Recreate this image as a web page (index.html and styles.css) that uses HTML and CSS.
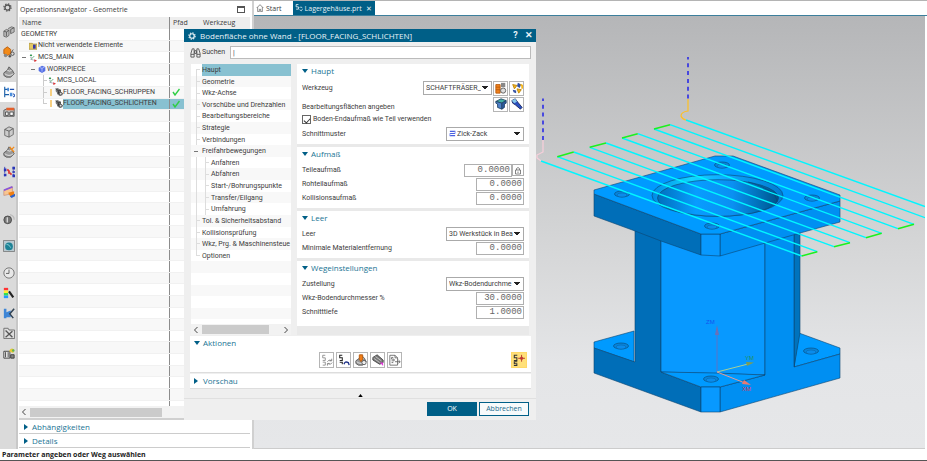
FILE: index.html
```html
<!DOCTYPE html>
<html lang="de">
<head>
<meta charset="utf-8">
<title>Lagergehäuse.prt</title>
<link rel="stylesheet" href="styles.css">
</head>
<body>
<svg class="defs" aria-hidden="true">
  <symbol id="gear" viewBox="0 0 12 12"><circle cx="6" cy="6" r="3.4" fill="none" stroke="currentColor" stroke-width="1.8"/><circle cx="6" cy="6" r="4.8" fill="none" stroke="currentColor" stroke-width="1.6" stroke-dasharray="1.9 1.87"/></symbol>
  <symbol id="csys" viewBox="0 0 12 12"><path d="M3 1v7l7 2" fill="none" stroke="#557" stroke-width="1" stroke-dasharray="2 1"/><path d="M1 3l2-3 2 3z" fill="#2a9a4a"/><path d="M3 8l5-5" stroke="#2a9a4a"/><path d="M8 8l4 2-4 2z" fill="#d33"/></symbol>
  <symbol id="mill" viewBox="0 0 12 12"><path d="M1 1l3-1 5 3v3l3 2-1 3-4 1-4-3V7L1 5z" fill="#777"/><path d="M1 1l4 3v4l3 2M5 4l4-1M5 7l4-1" fill="none" stroke="#222"/><circle cx="8.500" cy="8.500" r="2" fill="#ddd" stroke="#333"/></symbol>
  <symbol id="part" viewBox="0 0 14 14"><path d="M1 8l4-3 2-4 4 4 2 4-4 4H4L1 11z" fill="#999" stroke="#555"/><path d="M2 9q5 4 10 0M5 5q3 2 5 0" fill="none" stroke="#eee"/></symbol>
</svg>
<div class="workspace">
  <nav class="rail" aria-label="Ressourcenleiste">
    <button aria-label="Einstellungen"><svg viewBox="0 0 12 12"><use href="#gear"/></svg></button>
    <button aria-label="Baugruppe"><svg viewBox="0 0 14 14"><path d="M1 6l3-2 3 1v6l-3 2-3-1zM6 3l4-2 3 1v5l-4 2" fill="#bbb" stroke="#666"/><path d="M1 6l3 1v5M4 7l3-2M9 9V4l4-2" fill="none" stroke="#555"/></svg></button>
    <button aria-label="Beziehungen"><svg viewBox="0 0 14 14"><path d="M1 4l4-3 4 3v5l-4 2-4-2z" fill="#f28a18" stroke="#b65a0a"/><circle cx="3" cy="11" r="2" fill="#888"/><circle cx="11" cy="9" r="2" fill="none" stroke="#444"/><circle cx="8" cy="12" r="1.500" fill="#555"/><path d="M10 7l2-3" stroke="#555"/></svg></button>
    <button aria-label="Teile"><svg viewBox="0 0 14 14"><use href="#part"/></svg></button>
    <button class="current" aria-label="Operationsnavigator"><svg viewBox="0 0 14 14"><path d="M2 1v12M2 4h4M2 10h5" fill="none" stroke="#1b5fa8" stroke-width="1.300"/><path d="M5 2h2v4H5zM8 8h3v4H8z" fill="#4b8ddb"/><path d="M8 4h5M12 9l2 2-2 2" stroke="#1e4fb0" stroke-width="1.300" fill="none"/></svg></button>
    <button aria-label="Maschine"><svg viewBox="0 0 14 14"><path d="M1 5l4-2h8v9H1z" fill="#bbb" stroke="#555"/><path d="M4 2h9v3H4z" fill="#e4602b"/><path d="M3 7h3v4H3zM8 7h4v4H8z" fill="#fff" stroke="#444"/></svg></button>
    <button aria-label="Körper"><svg viewBox="0 0 14 14"><path d="M2 4l5-3 5 2v7l-5 3-5-2z" fill="#ccc" stroke="#666"/><path d="M2 4l5 2v7M7 6l5-3" fill="none" stroke="#555"/></svg></button>
    <button aria-label="Wiederverwendung"><svg viewBox="0 0 14 14"><use href="#part"/><path d="M8 1l2 3 3-3M10 4l3 3" stroke="#f28a18" stroke-width="1.500" fill="none"/></svg></button>
    <button aria-label="Abhängigkeit"><svg viewBox="0 0 14 14"><path d="M1 3h3v3H1zM1 9h3v3H1zM11 1h3v3h-3zM11 6h3v2h-3zM11 10h3v3h-3z" fill="#2a36b8"/><path d="M2 1v12M12 1v12" stroke="#2a36b8" stroke-dasharray="3 1"/><path d="M5 4l2 2v3M8 8l2 2" stroke="#d33" stroke-width="2" fill="none"/></svg></button>
    <button aria-label="Ansichten"><svg viewBox="0 0 14 14"><path d="M1 5l10-4v8L1 11z" fill="#f9c68f" stroke="#c98"/><path d="M1 5l10-4" stroke="#8a56d8" stroke-width="2"/><path d="M6 8l7-2v4l-4 3z" fill="#f07f12"/><path d="M8 12l6-3v3l-4 2z" fill="#2d62cc"/></svg></button>
    <button class="spaced" aria-label="Web"><svg viewBox="0 0 14 14"><circle cx="5.500" cy="8" r="4.500" fill="#777" stroke="#444"/><path d="M5 5v6" stroke="#ddd" stroke-width="1.500"/><path d="M8 2q5 1 5 6" stroke="#bbb" stroke-width="1.500" fill="none"/></svg></button>
    <button class="spaced" aria-label="Browser"><svg viewBox="0 0 14 14"><path d="M.5 .5h13v13H.5z" fill="#b9c9d0" stroke="#777"/><circle cx="7" cy="7.500" r="4.500" fill="#1d8295"/><path d="M4 5l3 1 2 3" stroke="#8ed0d8" fill="none"/></svg></button>
    <button class="spaced" aria-label="Verlauf"><svg viewBox="0 0 14 14"><circle cx="7" cy="7" r="6" fill="#e8e8e8" stroke="#666"/><path d="M7 3v4.500H3.500" stroke="#555" fill="none"/></svg></button>
    <button aria-label="Farben"><svg viewBox="0 0 14 14"><path d="M1 1h5v3H1z" fill="#f33"/><path d="M1 4h5v3H1z" fill="#fe3"/><path d="M1 7h5v3H1z" fill="#3d5"/><path d="M1 10h5v3H1z" fill="#29f"/><path d="M7 5l5 7" stroke="#222" stroke-width="2.500"/></svg></button>
    <button aria-label="Werkzeuge"><svg viewBox="0 0 14 14"><path d="M1 2h3v11H1zM4 6l5-2v8H4z" fill="#3e86d6"/><path d="M13 2L8 8l4 5" stroke="#345" stroke-width="1.800" fill="none"/></svg></button>
    <button aria-label="Rollen"><svg viewBox="0 0 14 14"><path d="M1 1.500h5l1 2h6.500v10H1z" fill="#ddd" stroke="#666"/><path d="M3 4l8 8M11 5l-8 7" stroke="#555" stroke-width="1.500"/></svg></button>
    <button aria-label="Fertigung"><svg viewBox="0 0 14 14"><path d="M1 5h7v8H1z" fill="#eee" stroke="#333"/><path d="M3 6v6M6 6v6M9 9h4v4H9z" stroke="#333" fill="#888"/><path d="M7 5q2-5 6-2l-1 4z" fill="#e8c834"/><circle cx="12" cy="4" r="1.500" fill="#5db84e"/></svg></button>
  </nav>

  <section class="navigator">
    <header class="nav-title"><span>Operationsnavigator - Geometrie</span><button class="maximize" aria-label="Maximieren"></button></header>
    <table class="ops">
      <thead><tr><th>Name</th><th>Pfad</th><th>Werkzeug</th></tr></thead>
      <tbody>
        <tr><td>GEOMETRY</td><td></td><td></td></tr>
        <tr><td class="d1"><svg viewBox="0 0 12 12"><path d="M0 2h5l1 1h6v8H0z" fill="#e2c765" stroke="#a58b30"/><path d="M6 4h4v6H6z" fill="#3438a8"/></svg>Nicht verwendete Elemente</td><td></td><td></td></tr>
        <tr><td class="d1 open"><svg viewBox="0 0 12 12"><use href="#csys"/></svg>MCS_MAIN</td><td></td><td></td></tr>
        <tr><td class="d2 open"><svg viewBox="0 0 12 12"><path d="M1 4l5-3 5 2v6l-5 3-5-3z" fill="#5570e4"/><path d="M3 4l3 1v5M6 5l4-2" stroke="#cdd6ff" fill="none"/></svg>WORKPIECE</td><td></td><td></td></tr>
        <tr><td class="d3"><svg viewBox="0 0 12 12"><use href="#csys"/></svg>MCS_LOCAL</td><td></td><td></td></tr>
        <tr><td class="d3 op"><svg viewBox="0 0 12 12"><use href="#mill"/></svg><span>FLOOR_FACING_SCHRUPPEN</span></td><td><svg class="check" viewBox="0 0 8 8"><path d="M1 4l2 3 4.500-6" fill="none" stroke="#2fce45" stroke-width="1.400"/></svg></td><td></td></tr>
        <tr class="selected"><td class="d3 op end"><svg viewBox="0 0 12 12"><use href="#mill"/></svg><span>FLOOR_FACING_SCHLICHTEN</span></td><td><svg class="check" viewBox="0 0 8 8"><path d="M1 4l2 3 4.500-6" fill="none" stroke="#2fce45" stroke-width="1.400"/></svg></td><td></td></tr>
        <tr><td></td><td></td><td></td></tr>
        <tr><td></td><td></td><td></td></tr>
        <tr><td></td><td></td><td></td></tr>
        <tr><td></td><td></td><td></td></tr>
        <tr><td></td><td></td><td></td></tr>
        <tr><td></td><td></td><td></td></tr>
        <tr><td></td><td></td><td></td></tr>
        <tr><td></td><td></td><td></td></tr>
        <tr><td></td><td></td><td></td></tr>
        <tr><td></td><td></td><td></td></tr>
        <tr><td></td><td></td><td></td></tr>
        <tr><td></td><td></td><td></td></tr>
        <tr><td></td><td></td><td></td></tr>
        <tr><td></td><td></td><td></td></tr>
        <tr><td></td><td></td><td></td></tr>
        <tr><td></td><td></td><td></td></tr>
        <tr><td></td><td></td><td></td></tr>
        <tr><td></td><td></td><td></td></tr>
        <tr><td></td><td></td><td></td></tr>
        <tr><td></td><td></td><td></td></tr>
        <tr><td></td><td></td><td></td></tr>
        <tr><td></td><td></td><td></td></tr>
        <tr><td></td><td></td><td></td></tr>
        <tr><td></td><td></td><td></td></tr>
        <tr><td></td><td></td><td></td></tr>
        <tr class="partial"><td></td><td></td><td></td></tr>
      </tbody>
    </table>
    <div class="hscroll"><svg viewBox="0 0 8 8"><path d="M5.500 1l-3 3 3 3"/></svg><i></i></div>
    <button class="fold">Abhängigkeiten</button>
    <button class="fold">Details</button>
  </section>

  <main class="stage">
    <div class="tabs">
      <button class="tab"><svg viewBox="0 0 12 12"><path d="M1 6l5-5 5 5M2.500 5v6.500h2.500V8h2v3.500h2.500V5" fill="none" stroke="#555"/></svg>Start</button>
      <button class="tab active"><svg viewBox="0 0 14 14"><path d="M6 1H2v4h4v4H2" fill="none" stroke="currentColor" stroke-width="1.500"/><path d="M8 7l2-2 3 2M13 9l-2 3-3-2" fill="none" stroke="currentColor" stroke-width="1.300"/></svg>Lagergehäuse.prt<span class="close">✕</span></button>
    </div>
    <div class="view">
      <svg viewBox="254 16 671 432" preserveAspectRatio="xMidYMid meet" role="img" aria-label="3D-Modell mit Werkzeugweg">
        <defs>
          <linearGradient id="bore"><stop offset="0" stop-color="#0070bd"/><stop offset=".32" stop-color="#089cff"/><stop offset=".62" stop-color="#0a90f2"/><stop offset=".85" stop-color="#006fb6"/><stop offset="1" stop-color="#00518a"/></linearGradient>
          <linearGradient id="rim"><stop offset="0" stop-color="#0089e6"/><stop offset=".3" stop-color="#12d5ff"/><stop offset=".55" stop-color="#0fa8ff"/><stop offset="1" stop-color="#007bd0"/></linearGradient>
        </defs>
        <g stroke="#0b4470" stroke-width=".6" stroke-linejoin="round">
          <path d="M594 342L634 331V362L594 348z" fill="#009aff"/>
          <path d="M799 333L840 348V354L794 367z" fill="#009aff"/>
          <path d="M794 230H800V333L794 367z" fill="#0073bd"/>
          <path d="M635 228L661 235V372L701 387V412L594 373V348L635 362z" fill="#006eb8"/>
          <path d="M661 235H765V375L661 372z" fill="#0899ff"/>
          <path d="M765 235L794 228V367L840 354V378L720 412V387L765 375z" fill="#008ff2"/>
          <path d="M661 372L716 373L765 375L720 387H701z" fill="#009aff"/>
          <path d="M701 387H720V412H701z" fill="#0899ff"/>
          <path d="M594 194L701 234V255L661 241L635 231L594 216z" fill="#006eb8"/>
          <path d="M720 234L840 201V222L800 233L720 256z" fill="#008ff2"/>
          <path d="M701 234H720V256L701 255z" fill="#0899ff"/>
          <path d="M715 156H733L840 195V201L720 234H701L594 194V190z" fill="#009aff"/>
          <ellipse cx="717.500" cy="195.500" rx="65.500" ry="20.800" fill="url(#rim)"/>
          <ellipse cx="718" cy="198" rx="60.500" ry="18.300" fill="url(#bore)"/>
          <path d="M748 182Q777 190 777 202" fill="none"/>
          <g fill="#0785dc"><ellipse cx="722" cy="165" rx="7.500" ry="3"/><ellipse cx="622" cy="194" rx="7.500" ry="3"/><ellipse cx="812" cy="198" rx="7.500" ry="3"/><ellipse cx="712" cy="226" rx="7.500" ry="3"/><ellipse cx="621" cy="346" rx="7.500" ry="3"/><ellipse cx="811" cy="351" rx="7.500" ry="3"/><ellipse cx="711" cy="379" rx="7.500" ry="3"/></g>
          <g fill="#0a8ceb" stroke-width=".3"><ellipse cx="722" cy="166" rx="5" ry="2"/><ellipse cx="622" cy="195" rx="5" ry="2"/><ellipse cx="812" cy="199" rx="5" ry="2"/><ellipse cx="712" cy="227" rx="5" ry="2"/><ellipse cx="621" cy="347" rx="5" ry="2"/><ellipse cx="811" cy="352" rx="5" ry="2"/><ellipse cx="711" cy="380" rx="5" ry="2"/></g>
        </g>
        <path d="M686 120L925 206.500M670 124.700L925 217.700M654 129L914 224.300M637.700 133.700L898 228.700M622 138L881.700 233.300M606 143L866 237.700M589.700 147.300L850 242.700M573.700 152L834 246.700M557.300 156.700L817.300 251.700M541 161L801.700 256" fill="none" stroke="#00f6ff" stroke-width="1.400"/>
        <path d="M670 124.700L654 129M637.700 133.700L622 138M606 143L589.700 147.300M573.700 152L557.300 156.700M914 224.300L898 228.700M881.700 233.300L866 237.700M850 242.700L834 246.700M817.300 251.700L801.700 256" stroke="#1df01d" stroke-width="1.500"/>
        <path d="M688 57V99M543 98.500V140" stroke="#2020e8" stroke-width="1.500" stroke-dasharray="4 3.800" stroke-dashoffset="1.500"/>
        <path d="M688 99V111Q681 112 681 116Q682 119 686 120" fill="none" stroke="#ffc022" stroke-width="1.200"/>
        <path d="M543 140V152L537 155V158L541 161" fill="none" stroke="#f8cfdb" stroke-width="1.200"/>
        <path d="M717 372V331" stroke="#5b74c8"/><path d="M715 335L717 325L719 335z" fill="#6a70b8"/>
        <path d="M717 372L750 363.500" stroke="#a5cf98"/><path d="M746 362L754 362.500L747 366z" fill="#7d9c55"/>
        <path d="M717 372L745 383" stroke="#e49a98"/><path d="M744 380L751 385L742 384z" fill="#e97a70"/>
        <text class="axis" x="706" y="324" fill="#1553f0">ZM</text><text class="axis" x="745" y="360" fill="#23925c">YM</text><text class="axis" x="742" y="391" fill="#d83a5a">XM</text>
      </svg>
    </div>
  </main>
</div>
<footer class="status">Parameter angeben oder Weg auswählen</footer>

<form class="dialog" role="dialog" aria-label="Bodenfläche ohne Wand">
  <header class="dlg-title"><svg viewBox="0 0 12 12"><use href="#gear"/></svg><h1>Bodenfläche ohne Wand - [FLOOR_FACING_SCHLICHTEN]</h1><button type="button" aria-label="Hilfe">?</button><button type="button" aria-label="Schließen">✕</button></header>
  <div class="search"><svg viewBox="0 0 12 12"><path d="M1 11V7l1.500-5h2v9zM7.500 11V2h2L11 7v4zM5 4h2v3H5zM1 8h3.500M7.500 8H11" fill="none" stroke="#555"/></svg><label for="q">Suchen</label><input id="q" type="text" value="|"></div>
  <div class="cols">
    <div class="treebox">
      <ul class="tree">
        <li class="first on"><span>Haupt</span></li>
        <li><span>Geometrie</span></li>
        <li><span>Wkz-Achse</span></li>
        <li><span>Vorschübe und Drehzahlen</span></li>
        <li><span>Bearbeitungsbereiche</span></li>
        <li><span>Strategie</span></li>
        <li><span>Verbindungen</span></li>
        <li class="open"><span>Freifahrbewegungen</span></li>
        <li class="sub"><span>Anfahren</span></li>
        <li class="sub"><span>Abfahren</span></li>
        <li class="sub"><span>Start-/Bohrungspunkte</span></li>
        <li class="sub"><span>Transfer/Eilgang</span></li>
        <li class="sub"><span>Umfahrung</span></li>
        <li><span>Tol. &amp; Sicherheitsabstand</span></li>
        <li><span>Kollisionsprüfung</span></li>
        <li><span>Wkz, Prg. &amp; Maschinensteue</span></li>
        <li class="last"><span>Optionen</span></li>
        <li class="empty"></li><li class="empty"></li><li class="empty"></li><li class="empty"></li><li class="empty"></li><li class="empty partial"></li>
      </ul>
      <div class="hscroll"><svg viewBox="0 0 8 8"><path d="M5.500 1l-3 3 3 3"/></svg><i></i><svg class="fwd" viewBox="0 0 8 8"><path d="M2.500 1l3 3-3 3"/></svg></div>
    </div>
    <div class="props">
      <section>
        <h2>Haupt</h2>
        <div class="row tall"><label for="tool">Werkzeug</label><select id="tool" class="tool"><option>SCHAFTFRÄSER_I</option></select>
          <button type="button" class="ib" aria-label="Werkzeug bearbeiten"><svg viewBox="0 0 14 14"><path d="M1 3h5v10H1z" fill="#f0811c" stroke="#b85a0a"/><path d="M1 6h5M1 9h5" stroke="#b85a0a"/><path d="M7 1h5v5H7z" fill="#888"/><circle cx="9.500" cy="10" r="3" fill="#ddd" stroke="#555"/></svg></button>
          <button type="button" class="ib" aria-label="Neues Werkzeug"><svg viewBox="0 0 14 14"><path d="M2 3l5 1-3 4zM7 8l5 1-3 4z" fill="#f5b51b" stroke="#b98207"/><path d="M8 1l4 2-2 4-3-2zM2 9l4 1v3l-3-1z" fill="#3552a4"/><path d="M11 3l2 1v4" stroke="#f5b51b" stroke-width="2" fill="none"/></svg></button></div>
        <div class="row tall low"><span>Bearbeitungsflächen angeben</span>
          <button type="button" class="ib" aria-label="Flächen"><svg viewBox="0 0 14 14"><path d="M1 4l6-3 6 2-5 3z" fill="#43b0a5" stroke="#246"/><path d="M1 4l7 2v7l-5-2V7L1 6z" fill="#4f82ca" stroke="#246"/><path d="M8 6l5-3v3l-2 1v4l-3 2z" fill="#2b5aa0" stroke="#246"/></svg></button>
          <button type="button" class="ib" aria-label="Anzeigen"><svg viewBox="0 0 14 14"><path d="M1 3l4-2 3 4 5 6-2 2-6-5-3-2z" fill="#2a4fc0" stroke="#18255a"/><path d="M1 3q1 2 3 3l3-2-2-3z" fill="#86c5e8"/></svg></button></div>
        <div class="row mid"><input type="checkbox" id="fin" checked><label for="fin">Boden-Endaufmaß wie Teil verwenden</label></div>
        <div class="row"><label for="cut">Schnittmuster</label><span class="withicon"><svg viewBox="0 0 8 8"><path d="M1 1.500h6M7 4H1M1 6.500h6" stroke="#4a5fe0" stroke-width="1.400"/><path d="M7 1v3M1 4v3" stroke="#8a98f0"/></svg><select id="cut"><option>Zick-Zack</option></select></span></div>
      </section>
      <section>
        <h2>Aufmaß</h2>
        <div class="row"><label for="a1">Teileaufmaß</label><input class="num" id="a1" value="0.0000"><button type="button" class="lock" aria-label="Sperren"><svg viewBox="0 0 8 8"><path d="M1.500 3.500h5v4h-5zM2.500 3.500V2q1.500-2 3 0v1.500M4 5v1.500" fill="none" stroke="#666" stroke-width=".8"/></svg></button></div>
        <div class="row"><label for="a2">Rohteilaufmaß</label><input class="num" id="a2" value="0.0000"></div>
        <div class="row"><label for="a3">Kollisionsaufmaß</label><input class="num" id="a3" value="0.0000"></div>
      </section>
      <section>
        <h2>Leer</h2>
        <div class="row"><label for="l1">Leer</label><select id="l1"><option>3D Werkstück in Bea</option></select></div>
        <div class="row"><label for="l2">Minimale Materialentfernung</label><input class="num" id="l2" value="0.0000"></div>
      </section>
      <section class="end">
        <h2>Wegeinstellungen</h2>
        <div class="row"><label for="w1">Zustellung</label><select id="w1"><option>Wkz-Bodendurchme</option></select></div>
        <div class="row"><label for="w2">Wkz-Bodendurchmesser %</label><input class="num" id="w2" value="30.0000"></div>
        <div class="row"><label for="w3">Schnitttiefe</label><input class="num" id="w3" value="1.0000"></div>
      </section>
    </div>
  </div>
  <section class="group">
    <h2>Aktionen</h2>
    <div class="actions">
      <button type="button" class="ib" aria-label="Generieren"><svg viewBox="0 0 14 14"><path d="M5 1.500H2v3h3v3H2M2 9.500h3V13H2" fill="none" stroke="#888"/><path d="M7.500 9q1.500-3 4.500-1.500M12.500 5.500v2.500h-2.500M13 10q-1.500 3-4.500 1.500M7.500 13.500V11H10" fill="none" stroke="#777"/></svg></button>
      <button type="button" class="ib" aria-label="Wiedergeben"><svg viewBox="0 0 14 14"><path d="M5 1.500H2v3h3v3H2M2 9.500h3V12" fill="none" stroke="#222" stroke-width="1.200"/><path d="M7 12q1-4 5-2l1 3" fill="none" stroke="#22358a" stroke-width="1.600"/></svg></button>
      <button type="button" class="ib" aria-label="Verifizieren"><svg viewBox="0 0 14 14"><use href="#part"/><path d="M5 1h4v5l-2 3-2-3z" fill="#f07e18" stroke="#b4580a"/><circle cx="10.500" cy="10" r="2.500" fill="#eee" stroke="#555"/></svg></button>
      <button type="button" class="ib" aria-label="Simulieren"><svg viewBox="0 0 14 14"><path d="M1 4l5-3 7 6v3l-4 2-8-5z" fill="#777" stroke="#444"/><path d="M2 5l7 5M4 3l7 5" stroke="#ccc"/><path d="M9 10h4v4z" fill="#e23cda"/></svg></button>
      <button type="button" class="ib" aria-label="Nachbearbeiten"><svg viewBox="0 0 14 14"><path d="M1 1.500h6l3 3V13H1zM7 1.500v3h3M5 4H3v2h3v2H3M5 10H3M7 9h6M11 7l2 2-2 2" fill="none" stroke="#666"/></svg></button>
      <button type="button" class="ib show" aria-label="Ergebnis anzeigen"><svg viewBox="0 0 14 14"><path d="M5 1.500H1.500v3h3v3H1M5 9H1.500v2.500h3V13.500H1" fill="none" stroke="#333" stroke-width="1.200"/><path d="M10 1v8M6 5h8" stroke="#b3302a"/><path d="M10 2.500L12.500 5L10 7.500L7.500 5z" fill="#c33a30"/></svg></button>
    </div>
  </section>
  <section class="group shut"><h2>Vorschau</h2></section>
  <div class="collapse"><svg viewBox="0 0 6 4"><path d="M0 4l3-4 3 4z"/></svg></div>
  <footer class="btns"><button type="submit" class="ok">OK</button><button type="button" class="cancel">Abbrechen</button></footer>
</form>
</body>
</html>
```
FILE: styles.css
```css
*, *::before { box-sizing: border-box; }
body {
  --ui: "Open Sans", "Noto Sans", sans-serif;
  margin: 0;
  height: 100vh;
  display: flex;
  flex-direction: column;
  overflow: hidden;
  font: 7px/11px Roboto, "Noto Sans", sans-serif;
  color: #3c3c3c;
  background: #fff;
}
button, input, select { font: inherit; color: inherit; margin: 0; padding: 0; border: 0; background: none; border-radius: 0; }
svg { display: block; flex: none; }
h1, h2, ul { margin: 0; padding: 0; font-weight: 400; list-style: none; }
.defs { width: 0; height: 0; position: absolute; }

.workspace { flex: 1; min-height: 0; display: flex; border-top: 1px solid #b4b4b4; }
.status {
  height: 12px;
  padding-left: 2px;
  border-bottom: 1px solid #555;
  font: 700 7px/11px var(--ui);
  color: #222;
}

/* Resource rail */
.rail { width: 18px; flex: none; background: #dadada; border-right: 2px solid #c8c8c8; display: flex; flex-direction: column; }
.rail button { height: 20px; padding-left: 3px; display: flex; align-items: center; flex: none; color: #555; }
.rail button:first-child { height: 13px; margin-bottom: 8px; }
.rail button:first-child svg { width: 9px; height: 9px; }
.rail svg { width: 12px; height: 12px; }
.rail .current { background: #fff; }
.rail .spaced { margin-top: 7px; }

/* Operation navigator */
.navigator { width: 236px; flex: none; display: flex; flex-direction: column; border-right: 2px solid #d0d0d0; padding: 0 2px 1px 1px; background: #fff; }
.nav-title { height: 16px; display: flex; align-items: center; justify-content: space-between; padding: 0 5px 0 1px; font-family: var(--ui); }
.maximize { width: 8px; height: 7px; border: 1px solid #555; border-top-width: 2px; }
.ops { flex: 1; min-height: 0; display: flex; flex-direction: column; }
.ops thead { display: block; background: #eee; }
.ops tbody { flex: 1; min-height: 0; display: flex; flex-direction: column; }
.ops tr { display: grid; grid-template-columns: 151px 30px 1fr; }
.ops tbody tr { flex: 1; min-height: 0; }
.ops tbody .partial { flex: 0.5; }
.ops tbody tr:nth-child(even) { background: #f8f8f8; border-top: 1px solid #f1f1f1; border-bottom: 1px solid #f1f1f1; }
.ops th { font: 400 7px/12px var(--ui); text-align: left; padding: 0 0 0 3px; }
.ops td { padding: 0 0 0 2px; display: flex; align-items: center; white-space: nowrap; min-height: 0; overflow: hidden; line-height: 9px; }
.ops tr > :first-child { border-right: 1px solid #8c8c8c; }
.ops td svg { width: 8px; height: 8px; margin-right: 1px; }
.ops .d1 { padding-left: 10px; }
.ops .d3 {
  padding-left: 29px;
  background: linear-gradient(#ccc, #ccc) 24px 0 / 1px 100% no-repeat, linear-gradient(#ccc, #ccc) 24px 50% / 4px 1px no-repeat;
}
.ops .d3.end { background-size: 1px 50%, 4px 1px; }
.ops .d1.open { padding-left: 3px; }
.ops .d2.open { padding-left: 12px; }
.ops .open::before { content: ""; width: 4px; height: 1px; background: #777; margin-right: 3px; }
.ops .op { padding-left: 31px; }
.ops .op::before { content: ""; width: 2px; height: 7px; background: #f6cf82; margin-right: 3px; flex: none; }
.ops .op svg { margin-right: 0; }
.ops .op span { flex: 1; align-self: stretch; display: flex; align-items: center; }
.ops .selected span, .ops .selected td:nth-child(n+2) { background: #88c1d1; }
.hscroll { height: 11px; flex: none; background: #f2f2f2; display: flex; align-items: center; }
.hscroll svg { width: 8px; height: 8px; margin: 0 1px; fill: none; stroke: #444; }
.hscroll i { height: 9px; background: #cbcbcb; margin-left: 1px; flex: 0 0 57%; }
.treebox .hscroll i { flex-basis: 67%; }
.hscroll .fwd { margin-left: auto; }
.navigator .hscroll { height: 14px; border-bottom: 2px solid #d0d0d0; }
.fold { height: 14px; display: flex; align-items: center; gap: 4px; padding-left: 5px; border-bottom: 1px solid #ccc; color: #1a7494; font: 8px/13px var(--ui); flex: none; }
.fold::before { content: ""; width: 0; border: 3px solid transparent; border-left: 4px solid #005f87; border-right: 0; }

/* Document tabs and graphics window */
.stage { flex: 1; min-width: 0; display: flex; flex-direction: column; }
.tabs { height: 15px; flex: none; display: flex; border-bottom: 1px solid #3c7f9c; }
.tab { display: flex; align-items: center; gap: 2px; padding: 0 11px 0 2px; font-family: var(--ui); white-space: nowrap; }
.tab svg { width: 8px; height: 8px; }
.tab.active { background: #005f87; color: #e6f1f5; padding: 0 3px 0 2px; }
.close { margin-left: 2px; }
.view { flex: 1; min-height: 0; margin-right: 2px; background: linear-gradient(#b5b6b8, #d6d7d8 55%, #e4e5e7 80%, #e6e7e9); border-bottom: 1px solid #ccc; }
.view svg { width: 100%; height: 100%; }
.axis { font: 6px "Liberation Sans", sans-serif; }

/* Operation dialog floating over the window */
.dialog { position: absolute; left: 184px; top: 29px; width: 352px; background: #efefef; }
.dlg-title { height: 13px; display: flex; align-items: center; background: #005f87; color: #e9f3f7; padding: 0 1px 0 4px; }
.dlg-title svg { width: 8px; height: 8px; margin-right: 4px; }
.dlg-title h1 { font: 8px/13px var(--ui); flex: 1; white-space: nowrap; }
.dlg-title button { width: 13px; font-size: 9px; font-weight: 700; }
.search { display: flex; align-items: center; padding: 4px 5px 5px 6px; }
.search svg { width: 11px; height: 11px; margin-right: 1px; }
.search label { width: 28px; }
.search input { flex: 1; height: 13px; border: 1px solid #bbb; background: #fff; padding-left: 2px; }
.cols { display: grid; grid-template-columns: 100px 1fr; gap: 6px; padding: 0 7px; }
.treebox { display: flex; flex-direction: column; background: #fff; min-width: 0; }
.tree { flex: 1; display: flex; flex-direction: column; }
.tree li {
  flex: 1; display: flex; min-height: 0; padding-left: 11px;
  background: linear-gradient(#ddd, #ddd) 5px 0 / 1px 100% no-repeat, linear-gradient(#ddd, #ddd) 5px 50% / 4px 1px no-repeat;
}
.tree li:nth-child(even) { background-color: #f8f8f8; }
.tree span { flex: 1; line-height: 12px; white-space: nowrap; }
.tree .on span { background: #88c1d1; }
.tree .first { background-position: 5px 100%, 5px 50%; background-size: 1px 50%, 4px 1px; }
.tree .last { background-size: 1px 50%, 4px 1px; }
.tree .sub { padding-left: 20px; background-image: linear-gradient(#ddd, #ddd), linear-gradient(#ddd, #ddd), linear-gradient(#ddd, #ddd); background-size: 1px 100%, 1px 100%, 4px 1px; background-position: 5px 0, 14px 0, 14px 50%; background-repeat: no-repeat; }
.tree .open { background-image: linear-gradient(#777, #777); background-size: 4px 1px; background-position: 3px 50%; }
.tree .empty { background-image: none; }
.tree .partial { flex: 0.4; }
.props { display: flex; flex-direction: column; gap: 3px; padding-bottom: 9px; background: #e9e9e9; min-width: 0; }
.props section { background: #fff; padding: 0 5px 3px 5px; }
.props .end { padding-bottom: 7px; }
h2 { height: 14px; display: flex; align-items: center; gap: 3px; font: 8px/14px var(--ui); color: #1a7494; }
h2::before { content: ""; width: 0; border: 3px solid transparent; border-top: 4px solid #005f87; border-bottom: 0; }
.props h2 { margin-bottom: 2px; }
.row { height: 14px; display: flex; align-items: center; justify-content: flex-end; }
.row > :first-child:not(input) { margin-right: auto; }
.row.tall { height: 16px; gap: 1px; }
.row.low > span { padding-top: 6px; }
.row.mid { height: 15px; justify-content: flex-start; gap: 2px; }
.row input[type="checkbox"] { appearance: none; width: 9px; height: 9px; border: 1px solid #666; display: grid; place-items: center; }
.row input[type="checkbox"]:checked::before { content: ""; width: 4px; height: 6px; border: solid #333; border-width: 0 1px 1px 0; rotate: 42deg; }
select {
  appearance: none; width: 78px; height: 14px; border: 1px solid #aaa; padding: 0 10px 0 2px; overflow: hidden; white-space: nowrap;
  background: linear-gradient(to bottom right, #222 50%, transparent 50%) right 3px center / 3px 4px no-repeat, linear-gradient(to bottom left, #222 50%, transparent 50%) right 6px center / 3px 4px no-repeat, #fff;
}
.tool { width: 69px; }
.withicon { position: relative; }
.withicon select { padding-left: 10px; display: block; }
.withicon svg { position: absolute; left: 3px; top: 3px; width: 7px; height: 7px; }
.num { width: 48px; height: 13px; border: 1px solid #b0b0b0; background: #fff; padding-right: 1px; text-align: right; font: 9px "Liberation Mono", monospace; color: #666; }
.lock { width: 12px; height: 12px; border: 1px solid #b0b0b0; display: grid; place-items: center; }
.lock svg { width: 8px; height: 9px; }
.ib { width: 15px; height: 15px; border: 1px solid #b5b5b5; background: #fff; display: grid; place-items: center; }
.ib svg { width: 12px; height: 12px; }
.group { background: #fff; margin: 1px 5px 0 6px; padding: 0 4px 4px 4px; border-bottom: 1px solid #ddd; }
.group + .group { margin-top: 1px; padding-bottom: 0; }
.shut h2::before { border: 3px solid transparent; border-left: 4px solid #005f87; border-right: 0; margin-right: 2px; }
.actions { display: flex; justify-content: flex-end; gap: 2px; padding-top: 2px; }
.actions .ib { height: 16px; }
.ib.show { width: 16px; margin-left: 107px; border-color: #ffd968; background: #ffe07a; }
.collapse { height: 10px; border-bottom: 1px solid #e0e0e0; display: grid; place-items: end center; padding-bottom: 1px; }
.collapse svg { width: 5px; height: 3px; }
.btns { display: flex; justify-content: flex-end; gap: 2px; padding: 3px 7px 4px; font: 7px/12px var(--ui); }
.btns button { width: 50px; height: 14px; border: 1px solid #005f87; }
.ok { background: #005f87; color: #fff; }
.cancel { color: #1a6a8c; background: #f7fafb; }
```
